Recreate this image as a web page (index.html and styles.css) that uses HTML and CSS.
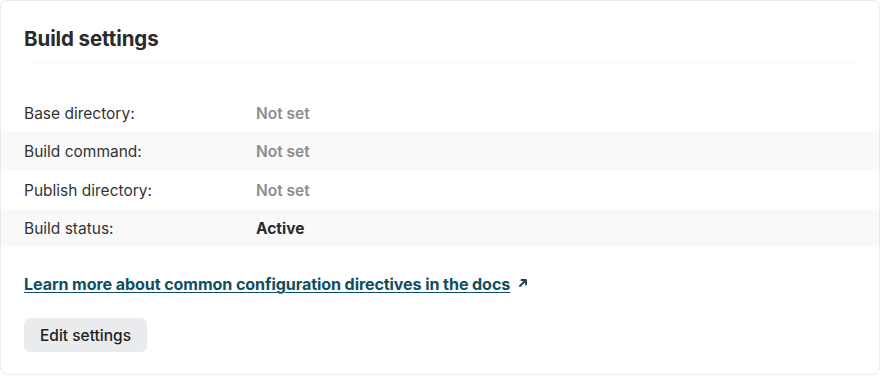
FILE: index.html
```html
<!DOCTYPE html>
<html lang="en">
<head>
<meta charset="utf-8">
<title>Build settings</title>
<link rel="stylesheet" href="styles.css">
</head>
<body>
<section class="card">
  <header class="card-head">
    <h2 class="title">Build settings</h2>
  </header>
  <div class="divider"></div>
  <dl class="rows">
    <div class="row"><dt class="label">Base directory:</dt><dd class="value muted">Not set</dd></div>
    <div class="row alt"><dt class="label">Build command:</dt><dd class="value muted">Not set</dd></div>
    <div class="row"><dt class="label">Publish directory:</dt><dd class="value muted">Not set</dd></div>
    <div class="row alt"><dt class="label">Build status:</dt><dd class="value strong">Active</dd></div>
  </dl>
  <p class="docs">
    <a class="docs-link" href="#">Learn more about common configuration directives in the docs</a>
    <svg class="ext" width="10" height="10" viewBox="0 0 10 10" aria-hidden="true"><path d="M2 8 L8 2 M3.5 2 H8 V6.5" fill="none" stroke="#1f4350" stroke-width="1.9" stroke-linecap="round" stroke-linejoin="round"/></svg>
  </p>
  <div class="actions">
    <button class="btn" type="button">Edit settings</button>
  </div>
</section>
</body>
</html>
```

FILE: styles.css
```css
* { box-sizing: border-box; }
html, body { margin: 0; padding: 0; background: #ffffff; }
body {
  font-family: Inter, "Noto Sans", "Liberation Sans", sans-serif;
  color: #2e2e2e;
  width: 880px;
  height: 376px;
}
.card {
  width: 880px;
  height: 375px;
  border: 1px solid #ebebeb;
  border-radius: 7px;
  background: #fff;
  overflow: hidden;
}
.card-head { padding: 26px 23px 0; }
.title {
  margin: 0;
  font-size: 20.5px;
  line-height: 24px;
  font-weight: 700;
  color: #2b2b2b;
  letter-spacing: -0.1px;
}
.divider {
  margin: 10px 24px 0 32px;
  height: 4px;
  background: #fbfbfb;
}
.rows { margin: 29px 0 0; padding: 0; }
.row {
  display: flex;
  align-items: center;
  height: 38.3px;
  padding: 1px 23px 0;
}
.row.alt { background: #f9f9f9; }
.label {
  width: 232px;
  margin: 0;
  font-size: 15.5px;
  color: #333;
}
.value { margin: 0; font-size: 15.5px; font-weight: 600; }
.muted { color: #8c8c8c; }
.strong { color: #2b2b2b; font-weight: 700; }
.docs {
  margin: 27px 0 0;
  padding: 0 23px;
  display: flex;
  align-items: center;
  gap: 8px;
}
.docs-link {
  font-size: 16.1px;
  font-weight: 700;
  color: #0f4f5f;
  text-decoration: underline;
  text-underline-offset: 2px;
  text-decoration-thickness: 1px;
  letter-spacing: -0.1px;
}
.ext { margin-top: -2px; }
.actions { padding: 24px 23px 0; }
.btn {
  font-family: inherit;
  font-size: 15.5px;
  font-weight: 500;
  color: #1f1f1f;
  background: #e9ebed;
  border: none;
  border-radius: 6px;
  height: 34px;
  padding: 0 16px;
}
```
